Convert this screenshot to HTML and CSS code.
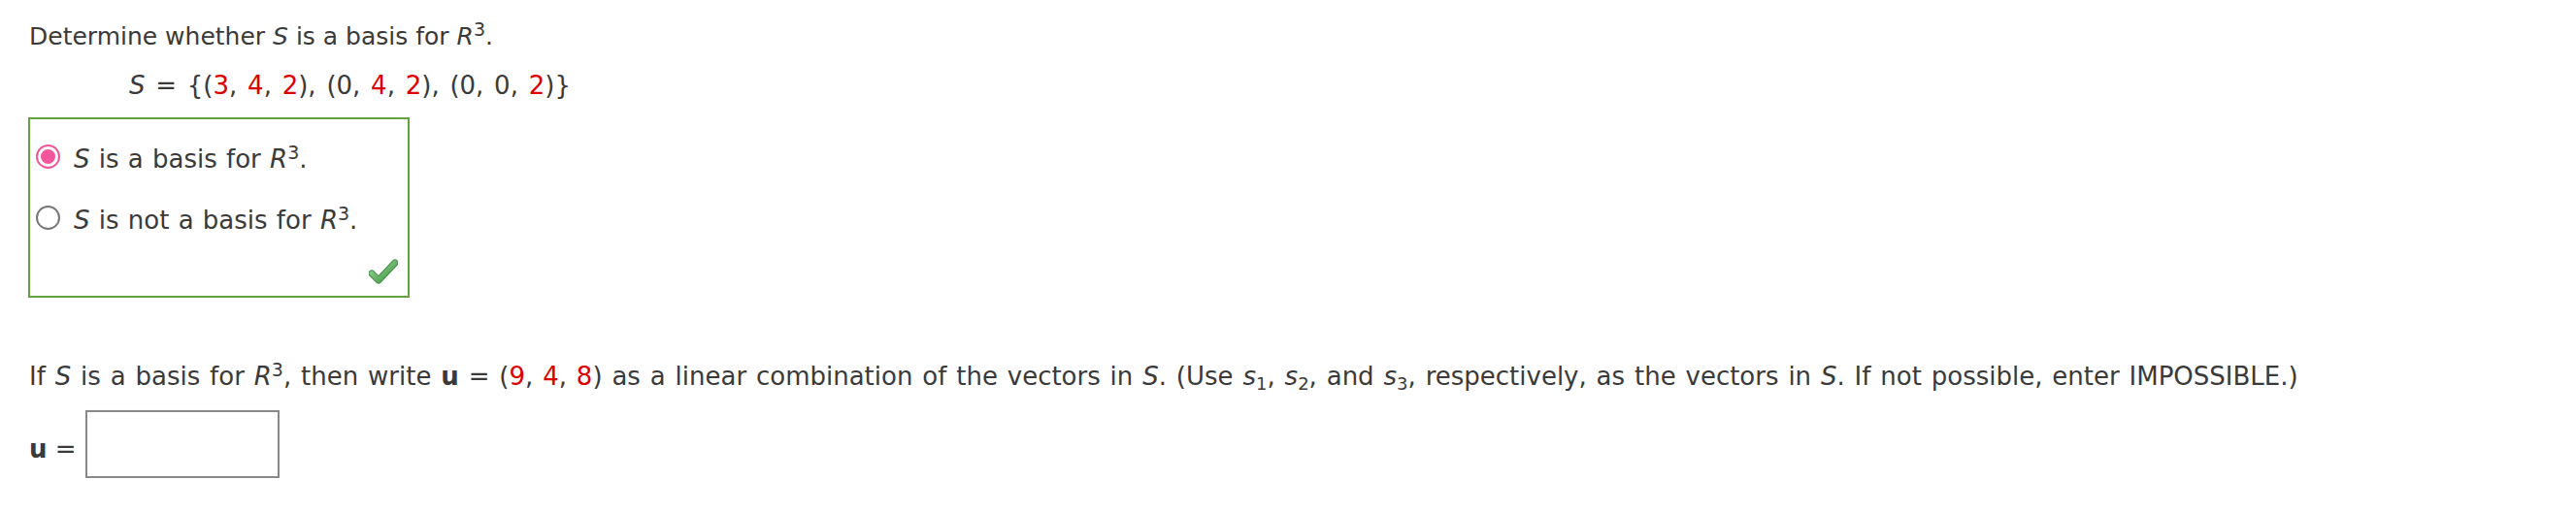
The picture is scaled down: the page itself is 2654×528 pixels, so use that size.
FILE: index.html
```html
<!DOCTYPE html>
<html lang="en">
<head>
    <meta charset="UTF-8">
    <title>Basis for R3</title>
    <link rel="stylesheet" href="styles.css">
</head>
<body>

<div class="question">
    <p class="line intro">Determine whether <i>S</i> is a basis for <i>R</i><span class="sup">3</span>.</p>
    <p class="line set"><i>S</i> = {(<span class="red">3</span>, <span class="red">4</span>, <span class="red">2</span>), (0, <span class="red">4</span>, <span class="red">2</span>), (0, 0, <span class="red">2</span>)}</p>

    <div class="answers">
        <label class="option">
            <span class="radio checked"></span>
            <span><i>S</i> is a basis for <i>R</i><span class="sup">3</span>.</span>
        </label>
        <label class="option second">
            <span class="radio"></span>
            <span><i>S</i> is not a basis for <i>R</i><span class="sup">3</span>.</span>
        </label>
        <div class="mark">
            <svg width="30" height="26" viewBox="0 0 30 26">
                <defs>
                    <linearGradient id="chk" x1="0" y1="0" x2="1" y2="1">
                        <stop offset="0" stop-color="#9ad696"/>
                        <stop offset="1" stop-color="#3c9443"/>
                    </linearGradient>
                </defs>
                <path d="M3 15 L10 22 L27 4" fill="none" stroke="#3f8f45" stroke-width="7" stroke-linecap="round" stroke-linejoin="round"/>
                <path d="M3 15 L10 22 L27 4" fill="none" stroke="url(#chk)" stroke-width="5" stroke-linecap="round" stroke-linejoin="round"/>
            </svg>
        </div>
    </div>

    <p class="line part">If <i>S</i> is a basis for <i>R</i><span class="sup">3</span>, then write <b>u</b> = (<span class="red">9</span>, <span class="red">4</span>, <span class="red">8</span>) as a linear combination of the vectors in <i>S</i>. (Use <i>s</i><span class="sub">1</span>, <i>s</i><span class="sub">2</span>, and <i>s</i><span class="sub">3</span>, respectively, as the vectors in <i>S</i>. If not possible, enter IMPOSSIBLE.)</p>

    <div class="entry">
        <span class="label"><b>u</b> =</span>
        <input type="text" class="answer-box">
    </div>
</div>

</body>
</html>
```

FILE: styles.css
```css
body {
    margin: 0;
    background: #fff;
    font-family: "DejaVu Sans", Verdana, sans-serif;
    font-size: 26px;
    color: #3a3a3a;
}
.question {
    padding: 20px 0 0 30px;
}
.line {
    margin: 0;
    line-height: 36px;
    white-space: nowrap;
    word-spacing: 1px;
}
.intro {
    font-size: 25px;
    word-spacing: 0;
}
.set {
    margin-top: 14px;
    padding-left: 103px;
    word-spacing: 2.5px;
}
.red {
    color: #dd0000;
}
.sup {
    font-size: 19px;
    vertical-align: 9px;
    line-height: 0;
}
.sub {
    font-size: 18px;
    vertical-align: -5px;
    line-height: 0;
}
b {
    font-weight: bold;
}
.answers {
    box-sizing: border-box;
    width: 393px;
    height: 186px;
    margin: 15px 0 0 -1px;
    border: 2px solid #62a23c;
    padding: 23px 10px 12px 6px;
    display: flex;
    flex-direction: column;
}
.option {
    display: flex;
    align-items: center;
    line-height: 36px;
    white-space: nowrap;
    word-spacing: 1px;
}
.option.second {
    margin-top: 27px;
}
.radio {
    box-sizing: border-box;
    width: 25px;
    height: 25px;
    border-radius: 50%;
    border: 2px solid #777;
    margin: 0 14px 5px 0;
    display: flex;
    align-items: center;
    justify-content: center;
    flex-shrink: 0;
}
.radio.checked {
    border-color: #f2559b;
}
.radio.checked::after {
    content: "";
    width: 15px;
    height: 15px;
    border-radius: 50%;
    background: #f2559b;
}
.mark {
    margin-top: auto;
    display: flex;
    justify-content: flex-end;
}
.mark svg {
    display: block;
}
.part {
    margin-top: 63px;
    word-spacing: 1.6px;
}
.entry {
    display: flex;
    align-items: center;
    margin-top: 17px;
}
.label {
    line-height: 36px;
    padding-top: 9px;
    margin-right: 9px;
}
.answer-box {
    box-sizing: border-box;
    width: 200px;
    height: 70px;
    border: 2px solid #888;
    margin: 0;
    padding: 0;
}
```
